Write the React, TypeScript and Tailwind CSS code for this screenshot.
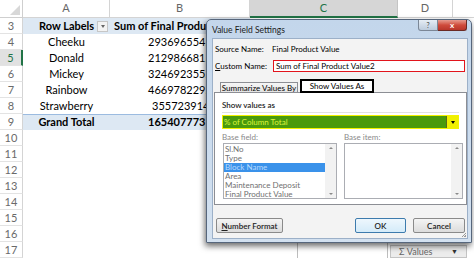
import clsx from "clsx";

type PivotRow = { label: string; value: string; pad?: string };

// only the part of column B left of the dialog shows
const pivotRows: PivotRow[] = [
  { label: "Cheeku", value: "293696554." },
  { label: "Donald", value: "212986681." },
  { label: "Mickey", value: "324692355." },
  { label: "Rainbow", value: "466978229." },
  { label: "Strawberry", value: "355723914", pad: "pl-[42px]" },
];

const baseFields = ["Sl.No", "Type", "Block Name", "Area", "Maintenance Deposit", "Final Product Value"];

function RowHead({ n, active }: { n: number; active?: boolean }) {
  return (
    <div
      className={clsx(
        "w-[23px] shrink-0 flex items-center justify-center border-b border-b-[#e3e3e3] leading-none",
        active
          ? "bg-[#e1e1e1] text-[#217346] border-r-2 border-r-[#217346]"
          : "text-[#6a6a6a] border-r border-r-[#d4d4d4]"
      )}
    >
      {n}
    </div>
  );
}

function BCell({ children, className }: { children: React.ReactNode; className?: string }) {
  return (
    <div className={clsx("w-[140px] flex items-center", className)}>
      <div className="w-[100px] overflow-hidden whitespace-nowrap">{children}</div>
    </div>
  );
}

function Sheet() {
  return (
    <div className="flex flex-col text-[11px] text-black">
      {/* column headers */}
      <div className="flex h-[18px] text-[11px] text-[#666]">
        <div className="w-[23px] flex items-end justify-end p-[2px] border-r border-b border-[#cfcfcf]">
          <div className="w-0 h-0 border-l-[10px] border-l-transparent border-b-[10px] border-b-[#d8d8d8]" />
        </div>
        <div className="w-[87px] flex items-center justify-center border-r border-b border-[#d4d4d4]">A</div>
        <div className="w-[140px] flex items-center justify-center border-r border-b border-[#d4d4d4]">B</div>
        <div className="w-[148px] flex items-center justify-center bg-[#d6d6d6] text-[#217346] border-r border-r-[#c4c4c4] border-b-2 border-b-[#217346]">C</div>
        <div className="w-[55px] flex items-center justify-center border-r border-b border-[#d4d4d4]">D</div>
        <div className="flex-1 border-b border-[#d4d4d4]" />
      </div>

      {/* row 3 - pivot header */}
      <div className="flex h-[16px]">
        <RowHead n={3} />
        <div className="w-[87px] flex items-center pl-[16px] bg-[#dde8f3] font-bold whitespace-nowrap">
          Row Labels
          <div className="ml-[3px] w-[11px] h-[11px] flex items-center justify-center border border-[#c6c6c6] bg-[#f3f3f3]">
            <div className="w-0 h-0 border-l-[2.5px] border-r-[2.5px] border-t-[3px] border-l-transparent border-r-transparent border-t-[#666]" />
          </div>
        </div>
        <BCell className="bg-[#dde8f3] font-bold">
          <div className="pl-[4px]">Sum of Final Produ</div>
        </BCell>
      </div>

      {pivotRows.map((r, i) => (
        <div key={r.label} className="flex h-[16px]">
          <RowHead n={i + 4} active={i === 1} />
          <div className="w-[87px] flex items-center justify-center whitespace-nowrap">{r.label}</div>
          <BCell>
            <div className={r.pad ?? "pl-[38px]"}>{r.value}</div>
          </BCell>
        </div>
      ))}

      {/* row 9 - grand total */}
      <div className="flex h-[16px]">
        <RowHead n={9} />
        <div className="w-[87px] flex items-center justify-center bg-[#dde8f3] border-t border-[#9bbbe0] font-bold whitespace-nowrap">
          Grand Total
        </div>
        <BCell className="bg-[#dde8f3] border-t border-[#9bbbe0] font-bold">
          <div className="pl-[38px]">165407773</div>
        </BCell>
      </div>

      {[10, 11, 12, 13, 14, 15, 16, 17].map((n) => (
        <div key={n} className="flex h-[16px]">
          <RowHead n={n} />
        </div>
      ))}
    </div>
  );
}

function ListBox({ items, width, ml }: { items: string[]; width: string; ml: string }) {
  return (
    <div className={clsx("flex h-[56px] border border-[#abadb3] bg-white", width, ml)}>
      <div className="flex-1 flex flex-col pt-[1px] text-[8px] text-[#707070]">
        {items.map((it) => (
          <div
            key={it}
            className={clsx(
              "h-[9px] leading-[9px] pl-[1px] whitespace-nowrap",
              it === "Block Name" && "bg-[#3a92ea] text-[#b9daff]"
            )}
          >
            {it}
          </div>
        ))}
      </div>
      <div className="w-[11px] flex flex-col items-center justify-between py-[3px] bg-[#f2f2f2]">
        <div className="w-0 h-0 border-l-[2.5px] border-r-[2.5px] border-b-[2.5px] border-l-transparent border-r-transparent border-b-[#8a8a8a]" />
        <div className="w-0 h-0 border-l-[2.5px] border-r-[2.5px] border-t-[2.5px] border-l-transparent border-r-transparent border-t-[#8a8a8a]" />
      </div>
    </div>
  );
}

function Btn({ children, w, focus, className }: { children: React.ReactNode; w: string; focus?: boolean; className?: string }) {
  return (
    <div
      className={clsx(
        "h-[15px] flex items-center justify-center rounded-[2px] border text-[8px] font-semibold text-[#222]",
        focus
          ? "border-[#3d7bad] bg-gradient-to-b from-[#eef7fd] to-[#d4ebf9]"
          : "border-[#8a8a8a] bg-gradient-to-b from-[#f4f4f4] to-[#dcdcdc]",
        w,
        className
      )}
    >
      {children}
    </div>
  );
}

function ValueFieldDialog() {
  return (
    <div className="absolute left-[206px] top-[19px] w-[266px] h-[224px] flex flex-col rounded-t-[5px] border border-[#56667c] bg-gradient-to-b from-[#c3d6eb] to-[#d3e1f0] shadow-[-1px_3px_6px_rgba(0,0,0,0.6)] text-[8px] text-black">
      {/* title bar */}
      <div className="flex h-[18px] shrink-0 items-start">
        <div className="pl-[5px] pt-[5px] text-[8.5px] leading-[10px] text-[#1a1a1a]">Value Field Settings</div>
        <div className="ml-auto mr-[4px] flex">
          <div className="w-[20px] h-[11px] flex items-center justify-center rounded-bl-[3px] border border-t-0 border-[#7b8797] bg-gradient-to-b from-[#e6edf5] to-[#bccbdc] text-[7px] leading-none text-[#444]">
            ?
          </div>
          <div className="w-[29px] h-[11px] flex items-center justify-center rounded-br-[3px] border border-t-0 border-l-0 border-[#6b2a24] bg-gradient-to-b from-[#e59a8f] via-[#cf4b3c] to-[#b8362a] text-[8px] font-bold leading-none text-white">
            x
          </div>
        </div>
      </div>

      {/* client area */}
      <div className="relative ml-[5px] mr-[3px] mb-[3px] flex-1 flex flex-col border border-[#9cb0c8] bg-[#f3f3f3]">
        <div className="mt-[4px] h-[12px] flex items-center whitespace-nowrap">
          <div className="pl-[2px] w-[59px]">Source Name:</div>
          <div>Final Product Value</div>
        </div>
        <div className="mt-[5px] h-[12px] flex items-center whitespace-nowrap">
          <div className="pl-[2px] w-[60px]">
            <span className="underline">C</span>ustom Name:
          </div>
          <div className="w-[192px] h-[12px] flex items-center pl-[2px] border-[1.5px] border-[#e2141c] bg-white">
            Sum of Final Product Value2
          </div>
        </div>

        {/* tabs */}
        <div className="mt-[7px] h-[13px] flex items-start whitespace-nowrap">
          <div className="ml-[7px] mt-[3px] w-[78px] h-[10px] flex items-center justify-center border border-b-0 border-[#8c8e94] bg-gradient-to-b from-[#f6f6f6] to-[#e3e3e3]">
            Summarize Values By
          </div>
          <div className="relative z-10 ml-[2px] w-[74px] h-[14px] flex items-center justify-center border-2 border-black bg-white">
            Show Values As
          </div>
        </div>

        {/* tab panel */}
        <div className="ml-[1px] w-[253px] h-[113px] flex flex-col border border-[#8c8e94] bg-white">
          <div className="mt-[6px] ml-[7px] h-[12px] flex items-center font-semibold text-[#1e1e1e]">
            Show values as
          </div>
          <div className="mt-[1px] mx-[7px] h-px bg-[#e2e2e2]" />
          <div className="mt-[2px] ml-[7px] w-[237px] h-[14px] flex border-[1.5px] border-[#f2f200] bg-[#4a9a0c]">
            <div className="flex-1 flex items-center pl-[1px] text-[#dcf53c]">% of Column Total</div>
            <div className="w-[12px] flex items-center justify-center bg-[#f0f000] border-l border-[#5b6b1a]">
              <div className="w-0 h-0 border-l-[2.5px] border-r-[2.5px] border-t-[3px] border-l-transparent border-r-transparent border-t-black" />
            </div>
          </div>
          <div className="mt-[2px] h-[12px] flex items-center text-[#8a8a8a]">
            <div className="ml-[7px] w-[122px]">Base field:</div>
            <div>Base item:</div>
          </div>
          <div className="flex">
            <ListBox items={baseFields} width="w-[114px]" ml="ml-[8px]" />
            <ListBox items={[]} width="w-[119px]" ml="ml-[7px]" />
          </div>
        </div>

        {/* buttons */}
        <div className="mt-[13px] flex gap-[7px] mr-[2px]">
          <Btn w="w-[67px]" className="ml-[3px]">
            <span className="underline">N</span>umber Format
          </Btn>
          <Btn w="w-[51px]" focus className="ml-auto">
            OK
          </Btn>
          <Btn w="w-[52px]">Cancel</Btn>
        </div>

        {/* resize grip */}
        <div className="absolute right-[1px] bottom-[1px] w-[5px] h-[5px] bg-[linear-gradient(135deg,transparent_55%,#9a9a9a_55%,#9a9a9a_65%,transparent_65%,transparent_80%,#9a9a9a_80%)]" />
      </div>
    </div>
  );
}

function FieldListStrip() {
  return (
    <div className="absolute left-[297px] top-[243px] right-0 bottom-0 flex border-l border-[#bdbdbd] bg-white">
      <div className="w-[90px] border-r border-[#bdbdbd]" />
      <div className="ml-[2px] mt-[2px] w-[77px] flex items-center justify-between px-[8px] border border-[#c4c4c4] bg-[#ececec] text-[9px] text-[#666]">
        <span>Σ Values</span>
        <span className="text-[7px] text-[#333]">▼</span>
      </div>
    </div>
  );
}

export default function App() {
  return (
    <div className="relative w-[474px] h-[258px] overflow-hidden bg-white font-[Lato,sans-serif]">
      <Sheet />
      <FieldListStrip />
      <ValueFieldDialog />
    </div>
  );
}
